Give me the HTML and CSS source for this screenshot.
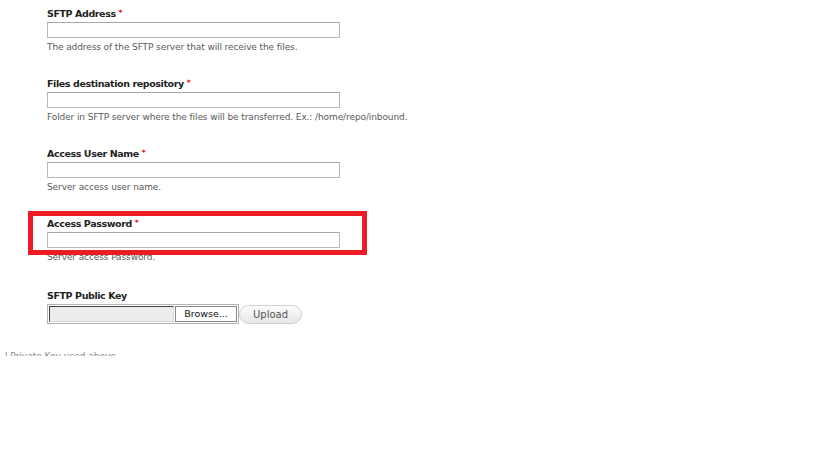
FILE: index.html
```html
<!DOCTYPE html>
<html lang="en">
<head>
<meta charset="utf-8">
<title>SFTP settings</title>
<link rel="stylesheet" href="styles.css">
</head>
<body>
<div class="page">
  <div class="form-item">
    <label class="label">SFTP Address <span class="req">*</span></label>
    <input class="text" type="text">
    <div class="desc">The address of the SFTP server that will receive the files.</div>
  </div>
  <div class="form-item">
    <label class="label">Files destination repository <span class="req">*</span></label>
    <input class="text" type="text">
    <div class="desc">Folder in SFTP server where the files will be transferred. Ex.: /home/repo/inbound.</div>
  </div>
  <div class="form-item">
    <label class="label">Access User Name <span class="req">*</span></label>
    <input class="text" type="text">
    <div class="desc">Server access user name.</div>
  </div>
  <div class="form-item annotated">
    <span class="annot"></span>
    <label class="label">Access Password <span class="req">*</span></label>
    <input class="text" type="password">
    <div class="desc">Server access Password.</div>
  </div>
  <div class="form-item file-item">
    <label class="label">SFTP Public Key</label>
    <div class="file-row">
      <div class="file-widget">
        <span class="file-field"></span>
        <span class="file-browse">Browse...</span>
      </div>
      <button class="upload" type="button">Upload</button>
    </div>
  </div>
</div>
<div class="cut">l Private Key used above.</div>
</body>
</html>
```
FILE: styles.css
```css
html, body {
  margin: 0;
  padding: 0;
  background: #ffffff;
}
body {
  font-family: "DejaVu Sans", Verdana, sans-serif;
  color: #333;
}
.page {
  padding: 7px 0 0 47px;
}
.form-item {
  position: relative;
  margin-bottom: 24px;
}
.label {
  display: block;
  height: 13px;
  font-weight: bold;
  font-size: 9.5px;
  letter-spacing: -0.4px;
  line-height: 13px;
  color: #222;
  margin-bottom: 2px;
}
.req {
  color: #e8000c;
  font-size: 7.5px;
  line-height: 0;
  vertical-align: 2px;
}
.text {
  display: block;
  box-sizing: border-box;
  width: 293px;
  height: 16px;
  margin: 0;
  padding: 0 2px;
  border: 1px solid #b8b8b8;
  border-top-color: #a8a8a8;
  background: #fff;
  font-size: 9px;
  outline: none;
}
.desc {
  margin-top: 3px;
  font-size: 9px;
  letter-spacing: -0.1px;
  line-height: 12px;
  color: #5a5a5a;
}
.annotated {
  position: relative;
}
.annot {
  position: absolute;
  left: -19px;
  top: -6px;
  width: 339px;
  height: 44px;
  box-sizing: border-box;
  border: 5px solid #ed1c24;
  pointer-events: none;
}
.file-item {
  margin-top: 26px;
}
.file-row {
  display: flex;
  align-items: center;
  gap: 0;
}
.file-widget {
  display: flex;
  box-sizing: border-box;
  width: 192px;
  height: 20px;
  padding: 1px;
  border: 1px solid #b4b4b4;
  background: #fff;
  gap: 1px;
}
.file-field {
  flex: 1;
  box-sizing: border-box;
  border: 1px solid;
  border-color: #404040 #d8d8d8 #d8d8d8 #404040;
  background: #ececec;
}
.file-browse {
  box-sizing: border-box;
  width: 62px;
  border: 1px solid #8a8a8a;
  background: #fff;
  font-family: "DejaVu Sans", Tahoma, sans-serif;
  font-size: 9.5px;
  line-height: 14px;
  text-align: center;
  color: #111;
}
.upload {
  box-sizing: border-box;
  height: 19px;
  width: 63px;
  padding: 0;
  border: 1px solid #cfcfcf;
  border-radius: 10px;
  background: linear-gradient(#fdfdfd, #e6e6e6);
  font-family: "DejaVu Sans", Tahoma, sans-serif;
  font-size: 10px;
  color: #555;
}
.cut {
  margin: 26px 0 0 5px;
  height: 6px;
  overflow: hidden;
  font-size: 9px;
  line-height: 12px;
  color: #888;
  white-space: nowrap;
}
```
